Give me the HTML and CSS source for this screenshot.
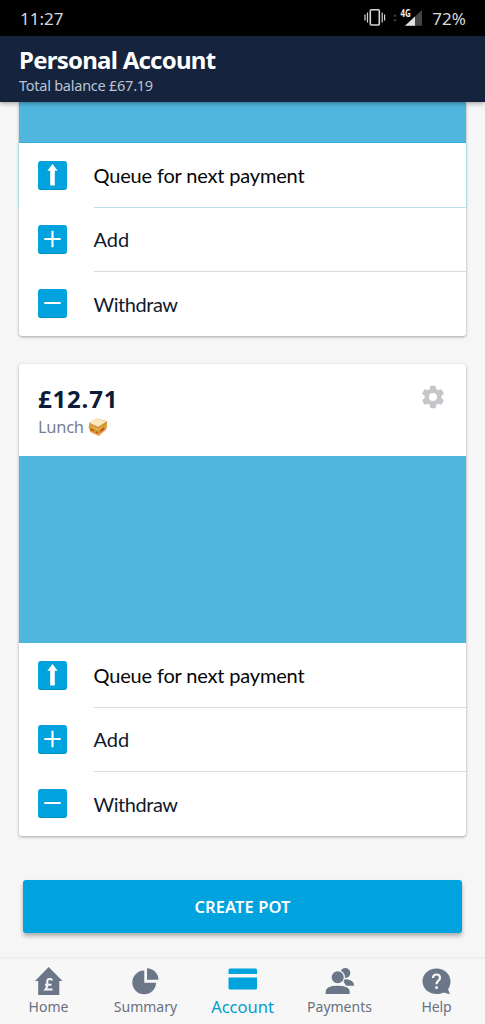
FILE: index.html
```html
<!DOCTYPE html>
<html lang="en">
<head>
<meta charset="utf-8">
<title>Personal Account</title>
<link rel="stylesheet" href="styles.css">
</head>
<body>
<div class="screen">
  <div class="status">
    <span class="clock">11:27</span>
    <svg class="status-icons" width="60" height="20" viewBox="0 0 60 20">
      <g fill="none" stroke="#d6d6d6">
        <rect x="6.300" y="1.800" width="9" height="15.200" rx="1" stroke-width="1.600"/>
        <path d="M3.500 4.500v10M1 6.500v6M18.200 4.500v10M20.600 6.500v6" stroke-width="1.200"/>
      </g>
      <path d="M29.200 8.500l1.800-2.500 1.800 2.500zM29.200 11.500l1.800 2.500 1.800-2.500z" fill="#444"/>
      <path d="M58 2v15.800H41z" fill="#444"/>
      <path d="M51 8.500v9.300H41z" fill="#e0e0e0"/>
      <text class="signal" transform="translate(36.500 9.200) scale(.8 1)">4G</text>
    </svg>
    <span class="battery">72%</span>
  </div>
  <header class="header">
    <h1 class="title">Personal Account</h1>
    <p class="balance">Total balance £67.19</p>
  </header>
  <main class="content">
    <section class="card card-first">
      <div class="banner banner-short"></div>
      <div class="row row-queue"><svg class="icon" viewBox="0 0 29 29"><path d="M14.500 3l5.300 7h-2.900v15.500h-4.800V10h-2.900z" fill="#fff"/></svg><span class="label label-queue">Queue for next payment</span></div>
      <div class="row"><svg class="icon" viewBox="0 0 29 29"><path d="M6 14.500h17M14.500 6v17" stroke="#fff" stroke-width="2.200"/></svg><span class="label label-add">Add</span></div>
      <div class="row"><svg class="icon" viewBox="0 0 29 29"><path d="M6 14.500h17" stroke="#fff" stroke-width="2.200"/></svg><span class="label label-withdraw">Withdraw</span></div>
    </section>
    <section class="card">
      <div class="pot-head">
        <div>
          <div class="amount">£12.71</div>
          <div class="pot-name"><span class="pot-text">Lunch</span>
            <svg class="sandwich" width="20" height="18" viewBox="0 0 20 18">
              <path d="M1 7l9 5 9-7.500v5L10.500 17 1.800 12.500z" fill="#c9721f"/>
              <path d="M1 7l8.500 4.500L19 5v3.500l-9 7-8.500-5z" fill="#f4b637"/>
              <path d="M.5 9l2 .4 1.500 2 2.500 0 2 1.600 2 .3 3-2 2-2.500 3-2" fill="none" stroke="#9aa52c" stroke-width="1.200"/>
              <path d="M2.500 11l3 1.800M7.500 14l2.500.8M12.500 13.200l4-3" stroke="#d43c22" stroke-width="1.500"/>
              <path d="M2 13l8.500 4 7.500-6" fill="none" stroke="#e9a552" stroke-width="1.500"/>
              <path d="M1 5L8.500.6 19 3.200v2.600L10 11.500 1.500 7.500z" fill="#d99440"/>
              <path d="M1.300 4.800L8.500.6l10 2.800L10 8.800z" fill="#fae7bc"/>
            </svg>
          </div>
        </div>
        <svg class="gear" width="28" height="28" viewBox="0 0 24 24"><path fill="#c5c6ca" d="M19.140 12.940c.04-.3.060-.610.060-.940s-.020-.640-.070-.940l2.030-1.580a.49.49 0 0 0 .12-.610l-1.920-3.320a.49.49 0 0 0-.590-.220l-2.390.960a7 7 0 0 0-1.620-.940l-.360-2.540A.48.48 0 0 0 13.920 2.400h-3.840a.48.48 0 0 0-.470.410l-.360 2.540a7 7 0 0 0-1.620.940l-2.390-.960a.49.49 0 0 0-.590.220L2.740 8.870a.49.49 0 0 0 .12.610l2.030 1.580a6 6 0 0 0 0 1.880l-2.030 1.580a.49.49 0 0 0-.12.610l1.920 3.320c.12.220.37.290.590.220l2.390-.960c.5.380 1.030.7 1.620.940l.36 2.540c.05.240.24.410.47.410h3.840c.24 0 .44-.170.470-.410l.36-2.540a7 7 0 0 0 1.620-.940l2.390.960c.22.080.47 0 .59-.220l1.920-3.320a.49.49 0 0 0-.12-.610zM12 15.500a3.500 3.500 0 1 1 0-7 3.500 3.500 0 0 1 0 7z"/></svg>
      </div>
      <div class="banner"></div>
      <div class="row"><svg class="icon" viewBox="0 0 29 29"><path d="M14.500 3l5.300 7h-2.900v15.500h-4.800V10h-2.900z" fill="#fff"/></svg><span class="label label-queue">Queue for next payment</span></div>
      <div class="row"><svg class="icon" viewBox="0 0 29 29"><path d="M6 14.500h17M14.500 6v17" stroke="#fff" stroke-width="2.200"/></svg><span class="label label-add">Add</span></div>
      <div class="row"><svg class="icon" viewBox="0 0 29 29"><path d="M6 14.500h17" stroke="#fff" stroke-width="2.200"/></svg><span class="label label-withdraw">Withdraw</span></div>
    </section>
    <button class="create"><span>CREATE POT</span></button>
  </main>
  <nav class="nav">
    <a class="tab"><svg width="30" height="30" viewBox="0 0 30 30"><path d="M14.700 1L28.500 15H25.300v14H4.200V15H1z" fill="#6b7689"/><path d="M18.200 14.300c-.7-2-5-2-5 1.200 0 3 1.200 5-1.700 8.100h7M11 18.800h6.500" fill="none" stroke="#f7f7f7" stroke-width="2"/></svg><span class="tab-home">Home</span></a>
    <a class="tab"><svg width="30" height="30" viewBox="0 0 30 30"><path d="M13.300 4.500v12.200h11.800A11.900 11.900 0 1 1 13.300 4.500z" fill="#6b7689"/><path d="M16 2.200A11.700 11.700 0 0 1 27.500 13.800H16z" fill="#6b7689"/></svg><span class="tab-summary">Summary</span></a>
    <a class="tab active"><svg width="30" height="30" viewBox="0 0 30 30"><path d="M2 2.500h25.500q1.500 0 1.500 1.500v4H.5V4Q.5 2.500 2 2.500zM.5 11.500H29V22q0 1.500-1.500 1.500H2Q.5 23.500.5 22z" fill="#00a3dd"/></svg><span class="tab-account">Account</span></a>
    <a class="tab"><svg width="30" height="30" viewBox="0 0 30 30"><g fill="#6b7689"><circle cx="20.300" cy="7" r="5"/><path d="M17 13q12-.5 12.200 6.800H21z"/></g><circle cx="12.700" cy="11.300" r="7.300" fill="#f7f7f7"/><path d="M-1 29v-4q0-7 13.500-7 5.500 0 9 1.800l3 1.700V29z" fill="#f7f7f7"/><g fill="#6b7689"><circle cx="12.700" cy="11.300" r="6"/><path d="M.7 28v-2.500q0-5.800 12-5.800t12 5.800V28z"/></g></svg><span class="tab-payments">Payments</span></a>
    <a class="tab"><svg width="30" height="30" viewBox="0 0 30 30"><path d="M14.500 2.500c8 0 14 5.700 14 12.800 0 3.600-1 6-2.500 8l2 5-6.400-1.700C12.500 30.900.5 25.700.5 15.300.5 8.200 6.500 2.500 14.500 2.500z" fill="#6b7689"/><path d="M11 12q0-3.500 3.500-3.500T18 11.700c0 3-3.500 3-3.500 6.500" fill="none" stroke="#f7f7f7" stroke-width="2.200"/><circle cx="14.500" cy="21.500" r="1.500" fill="#f7f7f7"/></svg><span class="tab-help">Help</span></a>
  </nav>
</div>
</body>
</html>
```
FILE: styles.css
```css
* { box-sizing: border-box; }
body { margin: 0; font-family: "Noto Sans", sans-serif; background: #f6f6f6; }
.screen { width: 485px; height: 1024px; display: flex; flex-direction: column; overflow: hidden; }
.status { height: 36px; background: #000; color: #dadada; display: flex; align-items: center; padding: 0 19px 0 20px; font-size: 17px; }
.clock { flex: 1; }
.battery { letter-spacing: .1px; }
.status-icons { margin-right: 8px; overflow: visible; }
.signal { font: 700 10px "Noto Sans", sans-serif; fill: #eee; }
.header { height: 66px; flex: none; background: #16233d; padding: 8px 19px 0; position: relative; z-index: 1; box-shadow: 0 1px 5px rgba(0,0,0,.4); }
.title { margin: 0; color: #fff; font-size: 24px; line-height: 32px; font-weight: 700; white-space: nowrap; letter-spacing: -.75px; }
.balance { margin: 0; color: #b9c3d5; font-size: 14.5px; line-height: 19px; letter-spacing: -.25px; }
.content { flex: 1; padding: 0 19px; }
.card { background: #fff; border-radius: 3px; margin-bottom: 28px; width: 447px; box-shadow: 0 1px 3px rgba(0,0,0,.35); }
.card-first { border-radius: 0 0 3px 3px; }
.banner { height: 187px; background: #4fb6de; }
.banner-short { height: 41px; border-bottom: 1px solid #38ade0; }
.pot-head { height: 92px; display: flex; justify-content: space-between; padding: 19px 19px 0 19px; }
.amount { font-size: 24px; line-height: 32px; font-weight: 700; color: #0c1b38; letter-spacing: .8px; }
.pot-name { display: flex; align-items: center; gap: 4px; color: #76808f; font-size: 16.5px; line-height: 24px; }
.pot-text { letter-spacing: -.3px; }
.row { height: 64.300px; display: flex; align-items: center; padding-left: 18.500px; position: relative; }
.row-queue { box-shadow: -1px 0 #b0def0, 1px 0 #b0def0; }
.row + .row::before { content: ""; position: absolute; top: -.4px; left: 75px; right: 0; height: 1px; background: #d3dcdf; }
.row-queue + .row::before { top: 0; background: #c0e0e8; }
.icon { width: 29px; height: 29px; background: #00a3dd; border-radius: 3px; border-bottom: 1px solid #008fc5; margin-right: 27px; }
.label { font-family: Lato, sans-serif; font-size: 20px; color: #101a2e; white-space: nowrap; }
.label-queue { color: #050505; letter-spacing: -.17px; }
.label-withdraw { letter-spacing: -.45px; }
.create { display: flex; align-items: center; justify-content: center; width: 439px; height: 53px; margin: 44px 4px 0; padding: 0; border: 0; border-radius: 3px; background: #00a3dd; color: #fff; font: 600 16.500px "Noto Sans", sans-serif; letter-spacing: .1px; box-shadow: 0 3px 4px rgba(0,0,0,.3); }
.nav { height: 67px; border-top: 2px solid #eee; display: grid; grid-template-columns: repeat(5, 1fr); background: #f7f7f7; }
.tab { display: flex; flex-direction: column; align-items: center; padding-top: 7px; color: #68717f; font-size: 14px; line-height: 21px; }
.tab-help { letter-spacing: -.1px; }
.active { color: #009dcc; font-size: 16.500px; }
```
